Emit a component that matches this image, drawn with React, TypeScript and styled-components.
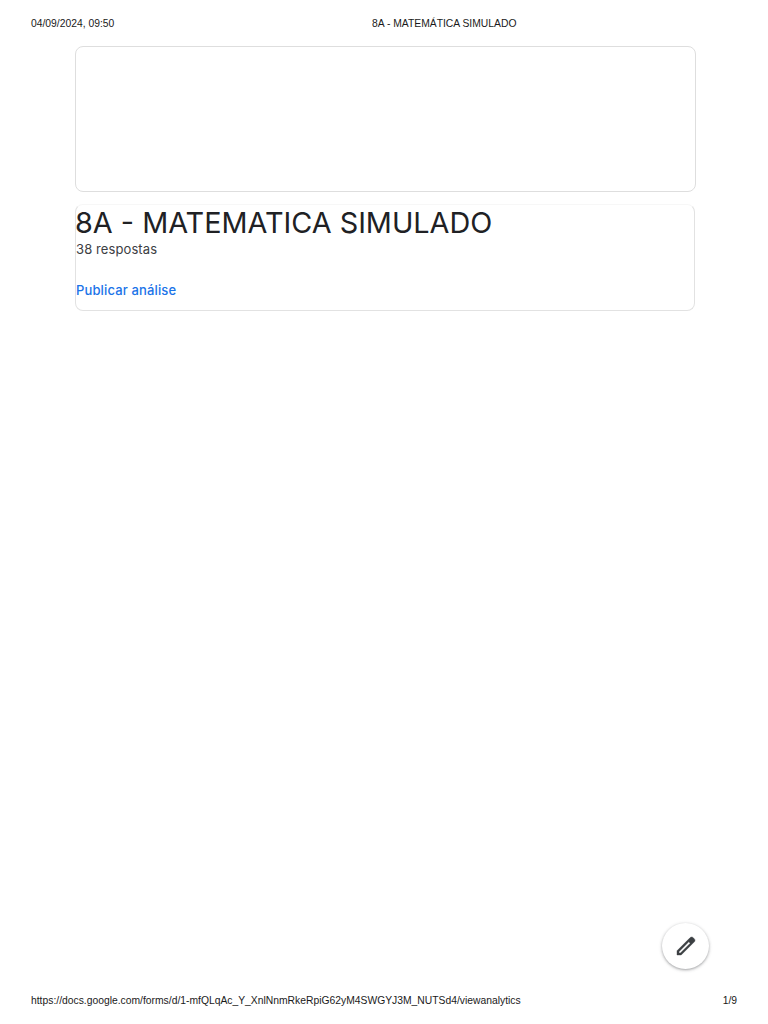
import React from "react";
import styled, { createGlobalStyle } from "styled-components";

const Global = createGlobalStyle`
  html, body { margin: 0; padding: 0; background: #fff; }
  #root { width: 768px; height: 1024px; overflow: hidden; }
`;

const Page = styled.div`
  position: relative;
  width: 768px;
  height: 1024px;
  box-sizing: border-box;
  display: flex;
  flex-direction: column;
  background: #fff;
`;

const PrintBar = styled.div`
  display: grid;
  align-items: center;
  padding: 0 31px;
  height: 12px;
  font: 10.33px/12px "Liberation Sans", Arial, sans-serif;
  color: #1a1a1a;
`;

const HeaderBar = styled(PrintBar)`
  margin-top: 18px;
  grid-template-columns: 341px auto;
`;

const FooterBar = styled(PrintBar)`
  margin-top: auto;
  margin-bottom: 17px;
  grid-template-columns: 1fr auto;
`;

const Main = styled.main`
  display: flex;
  flex-direction: column;
  gap: 12px;
  margin-top: 16px;
  padding-left: 75px;
`;

const Card = styled.section<{ $width: number; $height: number }>`
  box-sizing: border-box;
  width: ${(p) => p.$width}px;
  height: ${(p) => p.$height}px;
  border: 1px solid #dedede;
  border-radius: 8px;
`;

const SummaryCard = styled(Card)`
  border-color: #e2e2e2;
  border-top-color: #f7f7f7;
  display: flex;
  flex-direction: column;
  font-family: Inter, "Liberation Sans", sans-serif;
`;

const Title = styled.h1`
  margin: 0 0 0 -1px;
  padding-top: 2px;
  font-size: 28.8px;
  line-height: 32px;
  font-weight: 400;
  color: #202124;
  white-space: nowrap;
`;

const Count = styled.div`
  font-size: 13px;
  line-height: 20px;
  letter-spacing: 0.1px;
  color: #3c4043;
`;

const PublishLink = styled.a`
  margin-top: 21px;
  font-size: 13px;
  line-height: 20px;
  font-weight: 500;
  letter-spacing: 0.14px;
  color: #1a73e8;
`;

const Fab = styled.button`
  position: absolute;
  left: 662px;
  top: 923px;
  width: 47px;
  height: 46px;
  padding: 0;
  border: 0;
  border-radius: 50%;
  background: #fff;
  box-shadow: 0 1px 3px 1px rgba(60, 64, 67, 0.16), 0 1px 2px rgba(60, 64, 67, 0.3);
  display: flex;
  align-items: center;
  justify-content: center;
`;

export default function App() {
  return (
    <Page>
      <Global />
      <HeaderBar>
        <span>04/09/2024, 09:50</span>
        <span>8A - MATEMÁTICA SIMULADO</span>
      </HeaderBar>
      <Main>
        <Card $width={621} $height={146} />
        <SummaryCard $width={620} $height={107}>
          <Title>8A - MATEMATICA SIMULADO</Title>
          <Count>38 respostas</Count>
          <PublishLink>Publicar análise</PublishLink>
        </SummaryCard>
      </Main>
      <Fab aria-label="Editar">
        <svg width="24" height="24" viewBox="0 0 24 24" fill="#3c4043" stroke="#3c4043" strokeWidth="0.4">
          <path d="M20.41 4.94l-1.35-1.35c-.78-.78-2.05-.78-2.83 0L3 16.82V21h4.18L20.41 7.77c.79-.78.79-2.05 0-2.83zm-14 14.12L5 19v-1.36l9.82-9.82 1.41 1.41-9.82 9.83z" />
        </svg>
      </Fab>
      <FooterBar>
        <span>https://docs.google.com/forms/d/1-mfQLqAc_Y_XnlNnmRkeRpiG62yM4SWGYJ3M_NUTSd4/viewanalytics</span>
        <span>1/9</span>
      </FooterBar>
    </Page>
  );
}
